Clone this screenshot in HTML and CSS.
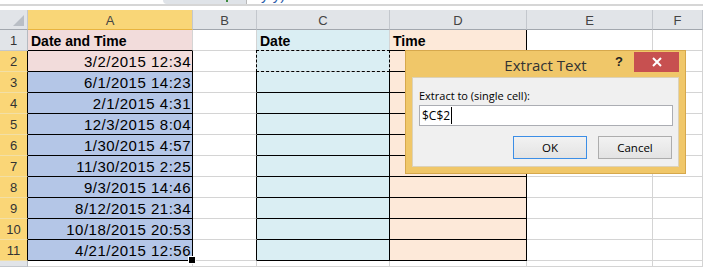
FILE: index.html
```html
<!doctype html>
<html lang="en">
<head>
    <meta charset="UTF-8">
    <title>Extract Text</title>
    <link rel="stylesheet" href="styles.css">
</head>
<body>
<!--formula bar remnant-->
<div class="top">
    <div class="fx">
        <div class="fx-gap"></div>
        <div class="fx-tab"><span class="dot"></span></div>
        <div class="fx-text">y/y)</div>
    </div>
</div>

<!--sheet-->
<div class="sheet">
    <div class="c h corner"><span class="tri"></span></div>
    <div class="c h hs">A</div>
    <div class="c h">B</div>
    <div class="c h">C</div>
    <div class="c h">D</div>
    <div class="c h">E</div>
    <div class="c h">F</div>

    <div class="c r">1</div>
    <div class="c pink bold kb">Date and Time</div>
    <div class="c"></div>
    <div class="c cyan bold">Date</div>
    <div class="c peach bold kr kb">Time</div>
    <div class="c"></div>
    <div class="c"></div>

    <div class="c r rs">2</div>
    <div class="c pink num kr kb">3/2/2015 12:34</div>
    <div class="c"></div>
    <div class="c cyan ants"></div>
    <div class="c peach kr kb"></div>
    <div class="c"></div>
    <div class="c"></div>

    <div class="c r rs">3</div>
    <div class="c blue num kr kb">6/1/2015 14:23</div>
    <div class="c kr"></div>
    <div class="c cyan kr kb"></div>
    <div class="c peach kr kb"></div>
    <div class="c"></div>
    <div class="c"></div>

    <div class="c r rs">4</div>
    <div class="c blue num kr kb">2/1/2015 4:31</div>
    <div class="c kr"></div>
    <div class="c cyan kr kb"></div>
    <div class="c peach kr kb"></div>
    <div class="c"></div>
    <div class="c"></div>

    <div class="c r rs">5</div>
    <div class="c blue num kr kb">12/3/2015 8:04</div>
    <div class="c kr"></div>
    <div class="c cyan kr kb"></div>
    <div class="c peach kr kb"></div>
    <div class="c"></div>
    <div class="c"></div>

    <div class="c r rs">6</div>
    <div class="c blue num kr kb">1/30/2015 4:57</div>
    <div class="c kr"></div>
    <div class="c cyan kr kb"></div>
    <div class="c peach kr kb"></div>
    <div class="c"></div>
    <div class="c"></div>

    <div class="c r rs">7</div>
    <div class="c blue num kr kb">11/30/2015 2:25</div>
    <div class="c kr"></div>
    <div class="c cyan kr kb"></div>
    <div class="c peach kr kb"></div>
    <div class="c"></div>
    <div class="c"></div>

    <div class="c r rs">8</div>
    <div class="c blue num kr kb">9/3/2015 14:46</div>
    <div class="c kr"></div>
    <div class="c cyan kr kb"></div>
    <div class="c peach kr kb"></div>
    <div class="c"></div>
    <div class="c"></div>

    <div class="c r rs">9</div>
    <div class="c blue num kr kb">8/12/2015 21:34</div>
    <div class="c kr"></div>
    <div class="c cyan kr kb"></div>
    <div class="c peach kr kb"></div>
    <div class="c"></div>
    <div class="c"></div>

    <div class="c r rs">10</div>
    <div class="c blue num kr kb">10/18/2015 20:53</div>
    <div class="c kr"></div>
    <div class="c cyan kr kb"></div>
    <div class="c peach kr kb"></div>
    <div class="c"></div>
    <div class="c"></div>

    <div class="c r rs">11</div>
    <div class="c blue num kr kb handle">4/21/2015 12:56</div>
    <div class="c kr"></div>
    <div class="c cyan kr kb"></div>
    <div class="c peach kr kb"></div>
    <div class="c"></div>
    <div class="c"></div>

    <div class="c r"></div>
    <div class="c"></div>
    <div class="c"></div>
    <div class="c"></div>
    <div class="c"></div>
    <div class="c"></div>
    <div class="c"></div>
</div>

<!--dialog-->
<div class="dialog">
    <div class="titlebar">
        <div></div>
        <div class="title">Extract Text</div>
        <div class="tools">
            <span class="help">?</span>
            <span class="close">
                <svg width="10" height="10" viewBox="0 0 10 10"><path d="M1 1L9 9M9 1L1 9" stroke="#fff" stroke-width="2"/></svg>
            </span>
        </div>
    </div>
    <div class="client">
        <div class="label">Extract to (single cell):</div>
        <div class="input"><span class="caret">$C$2</span></div>
        <div class="btns">
            <div class="btn def">OK</div>
            <div class="btn">Cancel</div>
        </div>
    </div>
</div>
</body>
</html>
```

FILE: styles.css
```css
*{
    padding: 0;
    margin: 0;
    box-sizing: border-box;
}
body{
    position: relative;
    width: 703px;
    height: 267px;
    overflow: hidden;
    background: #fff;
    font-family: "Liberation Sans", Arial, sans-serif;
    color: #000;
}
.top{
    height: 10px;
}
.fx{
    display: flex;
    height: 6px;
    border-bottom: 2px solid #d6d6d6;
    overflow: hidden;
}
.fx-gap{
    width: 163px;
}
.fx-tab{
    width: 84px;
    background: #dfe3e8;
    border-right: 1px solid #b9b9b9;
    border-bottom-left-radius: 6px;
    display: flex;
    justify-content: flex-end;
}
.dot{
    width: 2px;
    height: 2px;
    margin-right: 18px;
    background: #3d8a3d;
}
.fx-text{
    margin-top: -13px;
    padding-left: 14px;
    font-size: 15px;
    line-height: 16px;
    color: #2a5caa;
}
.sheet{
    display: grid;
    grid-template-columns: 28px 165px 64px 133px 137px 126px 50px;
    grid-template-rows: 20px repeat(11, 21px) 6px;
}
.c{
    border-right: 1px solid #d4d4d4;
    border-bottom: 1px solid #d4d4d4;
    line-height: 22px;
    white-space: nowrap;
    font-size: 15px;
}
.h{
    background: #e1e4e8;
    border-right-color: #c3c7cd;
    border-bottom-color: #a2a7ae;
    text-align: center;
    font-size: 13px;
    line-height: 21px;
    color: #444;
}
.hs{
    background: #f9d677;
    border-bottom-color: #e8b43f;
}
.corner{
    display: flex;
    justify-content: flex-end;
    align-items: flex-end;
    padding: 0 3px 3px 0;
}
.tri{
    width: 0;
    height: 0;
    border-left: 11px solid transparent;
    border-bottom: 11px solid #b9bec5;
}
.r{
    background: #e1e4e8;
    border-right-color: #b5bac1;
    border-bottom-color: #c3c7cd;
    text-align: center;
    font-size: 13px;
    color: #333;
}
.rs{
    background: #fad677;
    border-bottom-color: #f2dfa6;
}
.pink{
    background: #f2dcdb;
}
.blue{
    background: #b4c6e7;
}
.cyan{
    background: #daeef3;
}
.peach{
    background: #fde9d9;
}
.bold{
    font-weight: bold;
    font-size: 14px;
    padding-left: 3px;
}
.num{
    text-align: right;
    padding-right: 1px;
    letter-spacing: 0.5px;
}
.kr{
    border-right-color: #000;
}
.kb{
    border-bottom-color: #000;
}
.r.kr, .rs{
    border-right-color: #000;
}
.ants{
    position: relative;
}
.ants::after{
    content: "";
    position: absolute;
    left: -1px;
    top: -1px;
    right: -1px;
    bottom: -1px;
    border: 1px dashed #000;
}
.handle{
    position: relative;
    overflow: visible;
}
.handle::after{
    content: "";
    position: absolute;
    right: -4px;
    bottom: -4px;
    width: 6px;
    height: 6px;
    background: #000;
    border: 1px solid #fff;
}

/* dialog */
.dialog{
    position: absolute;
    left: 405px;
    top: 50px;
    width: 281px;
    height: 124px;
    border: 1px solid #d6a84c;
    background: #f0c769;
    padding: 0 6px 6px 6px;
    display: flex;
    flex-direction: column;
    font-family: "Open Sans", "Liberation Sans", sans-serif;
}
.titlebar{
    height: 26px;
    display: grid;
    grid-template-columns: 1fr auto 1fr;
}
.title{
    padding-top: 4px;
    font-size: 15px;
    line-height: 21px;
    color: #333;
}
.tools{
    display: flex;
    justify-content: flex-end;
    align-items: flex-start;
}
.help{
    margin: 1px 11px 0 0;
    font-family: "Liberation Sans", sans-serif;
    font-weight: bold;
    font-size: 13px;
    line-height: 20px;
    color: #222;
}
.close{
    margin-top: 1px;
    width: 45px;
    height: 20px;
    background: #c75050;
    display: flex;
    justify-content: center;
    align-items: center;
}
.close svg{
    display: block;
}
.client{
    flex: 1;
    border: 1px solid #dcd2b9;
    background: #f0f0f0;
    padding: 11px 5px 0 6px;
}
.label{
    font-size: 11px;
    line-height: 14px;
    color: #000;
}
.input{
    margin-top: 2px;
    height: 21px;
    border: 1px solid #abadb3;
    background: #fff;
    padding-left: 2px;
    font-size: 12px;
    line-height: 19px;
}
.caret{
    border-right: 1px solid #000;
    padding-right: 1px;
}
.btns{
    display: flex;
    justify-content: flex-end;
    gap: 11px;
    margin-top: 10px;
    padding-right: 1px;
}
.btn{
    width: 74px;
    height: 23px;
    border: 1px solid #adadad;
    background: linear-gradient(#f2f2f2, #e3e3e3);
    text-align: center;
    font-size: 11.5px;
    line-height: 21px;
}
.btn.def{
    border-color: #3c8ee6;
}
```
